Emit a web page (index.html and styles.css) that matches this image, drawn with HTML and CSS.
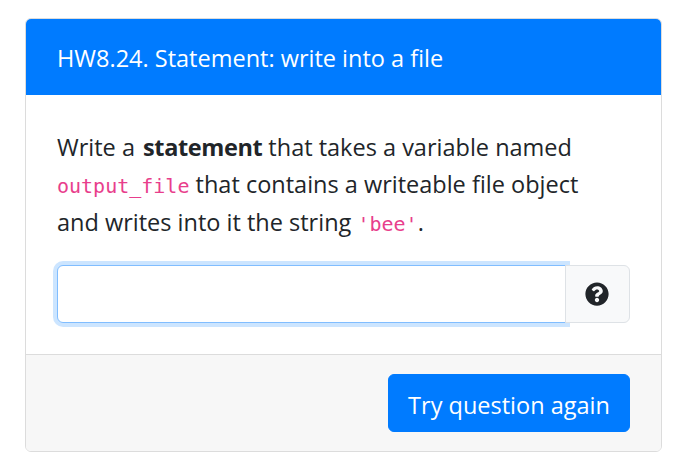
FILE: index.html
```html
<!DOCTYPE html>
<html lang="en">
<head>
<meta charset="utf-8">
<title>HW8.24</title>
<link rel="stylesheet" href="styles.css">
</head>
<body>
<div class="card">
  <div class="card-header">HW8.24. Statement: write into a file</div>
  <div class="card-body">
    <p class="prompt">Write a <strong>statement</strong> that takes a variable named <code>output_file</code> that contains a writeable file object and writes into it the string <code>'bee'</code>.</p>
    <div class="input-group">
      <input class="answer" type="text" aria-label="answer">
      <span class="help">
        <svg class="help-icon" viewBox="0 0 512 512" aria-hidden="true"><path d="M504 256c0 136.997-111.043 248-248 248S8 392.997 8 256C8 119.083 119.043 8 256 8s248 111.083 248 248zM262.655 90c-54.497 0-89.255 22.957-116.549 63.758-3.536 5.286-2.353 12.415 2.715 16.258l34.699 26.31c5.205 3.947 12.621 3.008 16.665-2.122 17.864-22.658 30.113-35.797 57.303-35.797 20.429 0 45.698 13.148 45.698 32.958 0 14.976-12.363 22.667-32.534 33.976C247.128 238.528 216 254.941 216 296v4c0 6.627 5.373 12 12 12h56c6.627 0 12-5.373 12-12v-1.333c0-28.462 83.186-29.647 83.186-106.667 0-58.002-60.165-102-116.531-102zM256 338c-25.365 0-46 20.635-46 46 0 25.364 20.635 46 46 46s46-20.636 46-46c0-25.365-20.635-46-46-46z"/></svg>
      </span>
    </div>
  </div>
  <div class="card-footer">
    <button class="btn" type="button">Try question again</button>
  </div>
</div>
</body>
</html>
```
FILE: styles.css
```css
* { box-sizing: border-box; }
html, body { margin: 0; padding: 0; background: #fff; }
body {
  padding: 18px 29px 0 25px;
  font-family: "Open Sans", "Noto Sans", sans-serif;
  font-size: 23.5px;
  line-height: 36px;
  color: #212529;
}
.card {
  border: 1px solid #dcdcdc;
  border-radius: 6px;
  overflow: hidden;
  background: #fff;
}
.card-header {
  background: #007bff;
  color: #fff;
  height: 76px;
  padding: 21px 31px;
}
.card-body { padding: 33.5px 31px 31px; }
.prompt { margin: 0 0 24px; max-width: 540px; line-height: 37.5px; }
.prompt strong { font-weight: 700; letter-spacing: -0.4px; margin-left: 2px; }
code {
  font-family: "DejaVu Sans Mono", monospace;
  font-size: 20px;
  line-height: 1;
  color: #e83e8c;
}
.input-group { display: flex; height: 58px; }
.answer {
  flex: 1;
  min-width: 0;
  height: 58px;
  border: 1px solid #80bdff;
  border-radius: 6px 0 0 6px;
  box-shadow: 0 0 0 4px rgba(0,123,255,.2);
  outline: none;
  padding: 0 18px;
  font: inherit;
}
.help {
  display: flex;
  align-items: center;
  justify-content: center;
  width: 65px;
  margin-left: -1px;
  background: #f8f9fa;
  border: 1px solid #dee2e6;
  border-radius: 0 6px 6px 0;
}
.help-icon { width: 24px; height: 24px; margin-left: -1px; fill: #212529; }
.card-footer {
  background: #f7f7f7;
  border-top: 1px solid #dcdcdc;
  padding: 19px 31px 19px;
  display: flex;
  justify-content: flex-end;
}
.btn {
  background: #007bff;
  color: #fff;
  border: 1px solid #007bff;
  border-radius: 6px;
  height: 58px;
  width: 242px;
  padding: 3px 0 0;
  font: inherit;
}
```
